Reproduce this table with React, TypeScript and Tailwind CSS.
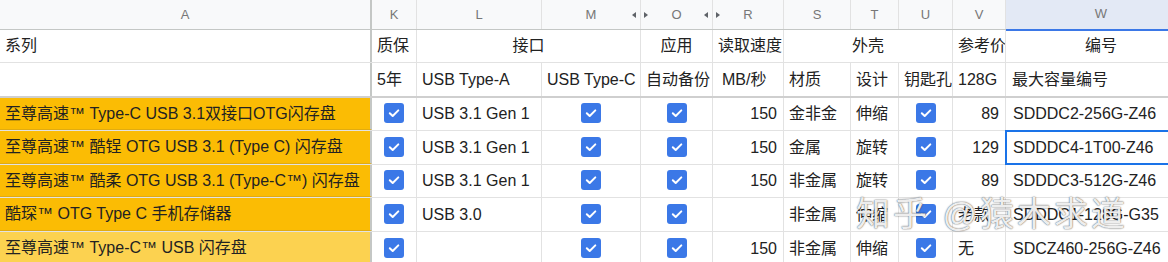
import React from 'react';
import clsx from 'clsx';

type Row = {
  name: string;
  iface: string;
  speed: string;
  material: string;
  design: string;
  price: string;
  priceRight: boolean;
  code: string;
  h: string;
  light?: boolean;
  selected?: boolean;
};

const rows: Row[] = [
  { name: '至尊高速™ Type-C USB 3.1双接口OTG闪存盘', iface: 'USB 3.1 Gen 1', speed: '150', material: '金非金', design: '伸缩', price: '89', priceRight: true, code: 'SDDDC2-256G-Z46', h: 'h-[33px]' },
  { name: '至尊高速™ 酷锃 OTG USB 3.1 (Type C) 闪存盘', iface: 'USB 3.1 Gen 1', speed: '150', material: '金属', design: '旋转', price: '129', priceRight: true, code: 'SDDDC4-1T00-Z46', h: 'h-[34px]', selected: true },
  { name: '至尊高速™ 酷柔 OTG USB 3.1 (Type-C™) 闪存盘', iface: 'USB 3.1 Gen 1', speed: '150', material: '非金属', design: '旋转', price: '89', priceRight: true, code: 'SDDDC3-512G-Z46', h: 'h-[33px]' },
  { name: '酷琛™ OTG Type C 手机存储器', iface: 'USB 3.0', speed: '', material: '非金属', design: '伸缩', price: '老款', priceRight: false, code: 'SDDDC1-128G-G35', h: 'h-[34px]' },
  { name: '至尊高速™ Type-C™ USB 闪存盘', iface: '', speed: '150', material: '非金属', design: '伸缩', price: '无', priceRight: false, code: 'SDCZ460-256G-Z46', h: 'h-[34px]', light: true },
];

const Cell: React.FC<{ w: string; className?: string; children?: React.ReactNode }> = ({ w, className, children }) => (
  <div
    className={clsx(
      'relative flex h-full shrink-0 items-center overflow-hidden whitespace-nowrap border-r border-[#e2e2e2] px-[5px]',
      w,
      className,
    )}
  >
    {children}
  </div>
);

const Check = () => (
  <div className="mx-auto mb-[2px] flex h-[20px] w-[20px] items-center justify-center rounded-[3px] bg-[#3b78e7]">
    <svg width="20" height="20" viewBox="0 0 20 20" fill="none">
      <path d="M5.8 10.2 L8.7 13 L14.3 7.4" stroke="white" strokeWidth="2" strokeLinecap="round" strokeLinejoin="round" />
    </svg>
  </div>
);

// hidden-columns marker sitting on a header boundary
const Hidden = () => (
  <div className="absolute right-[-9px] top-[11px] z-10">
    <svg width="18" height="8" viewBox="0 0 18 8">
      <path d="M1 4 L5 1 L5 7 Z" fill="#5f6368" />
      <path d="M17 4 L13 1 L13 7 Z" fill="#5f6368" />
    </svg>
  </div>
);

export default function App() {
  return (
    <div className="relative h-[262px] w-[1168px] overflow-hidden bg-white font-['Liberation_Sans','Noto_Sans_CJK_SC',sans-serif] text-[16px] text-[#222]">
      {/* column letters */}
      <div className="flex h-[30px] border-b border-[#c4c7c5] bg-[#f8f9fa] text-[13px] text-[#777]">
        <Cell w="w-[372px]" className="justify-center border-r-2 border-r-[#c4c7c5]">A</Cell>
        <Cell w="w-[45px]" className="justify-center">K</Cell>
        <Cell w="w-[125px]" className="justify-center">L</Cell>
        <div className="relative flex h-full w-[99px] shrink-0 items-center justify-center border-r border-[#e2e2e2]">
          M
          <Hidden />
        </div>
        <div className="relative flex h-full w-[72px] shrink-0 items-center justify-center border-r border-[#e2e2e2]">
          O
          <Hidden />
        </div>
        <Cell w="w-[71px]" className="justify-center">R</Cell>
        <Cell w="w-[67px]" className="justify-center">S</Cell>
        <Cell w="w-[48px]" className="justify-center">T</Cell>
        <Cell w="w-[54px]" className="justify-center">U</Cell>
        <Cell w="w-[53px]" className="justify-center">V</Cell>
        <div className="-mb-px flex h-[31px] w-[190px] shrink-0 items-center justify-center border-b-2 border-[#3b78e7] bg-[#e3e9f5] pb-[1px]">
          W
        </div>
      </div>

      {/* row 1 */}
      <div className="flex h-[33px] border-b border-[#e2e2e2]">
        <Cell w="w-[372px]" className="border-r-2 border-r-[#c4c7c5]">系列</Cell>
        <Cell w="w-[45px]" className="px-[3px]">质保</Cell>
        <Cell w="w-[224px]" className="justify-center">接口</Cell>
        <Cell w="w-[72px]" className="justify-center">应用</Cell>
        <Cell w="w-[71px]" className="px-[4px]">读取速度</Cell>
        <Cell w="w-[169px]" className="justify-center">外壳</Cell>
        <Cell w="w-[53px]" className="px-[4px]">参考价</Cell>
        <Cell w="w-[190px]" className="justify-center border-r-0">编号</Cell>
      </div>

      {/* row 2 */}
      <div className="flex h-[35px] border-b-2 border-[#cfcfcf]">
        <Cell w="w-[372px]" className="border-r-2 border-r-[#c4c7c5]" />
        <Cell w="w-[45px]" className="px-[3px]">5年</Cell>
        <Cell w="w-[125px]">USB Type-A</Cell>
        <Cell w="w-[99px]">USB Type-C</Cell>
        <Cell w="w-[72px]" className="px-[4px]">自动备份</Cell>
        <Cell w="w-[71px]" className="px-[9px]">MB/秒</Cell>
        <Cell w="w-[67px]">材质</Cell>
        <Cell w="w-[48px]">设计</Cell>
        <Cell w="w-[54px]">钥匙孔</Cell>
        <Cell w="w-[53px]">128G</Cell>
        <Cell w="w-[190px]" className="px-[6px]">最大容量编号</Cell>
      </div>

      {/* data */}
      {rows.map((r) => (
        <div key={r.code} className={clsx('flex border-b border-[#e2e2e2]', r.h)}>
          <Cell
            w="w-[372px]"
            className={clsx(
              '-mb-px h-[calc(100%+1px)] border-b border-r-2 border-b-[#e0ab12] border-r-[#c4c7c5]',
              r.light ? 'bg-[#fcd250]' : 'bg-[#fbbc04]',
            )}
          >
            {r.name}
          </Cell>
          <Cell w="w-[45px]">
            <Check />
          </Cell>
          <Cell w="w-[125px]">{r.iface}</Cell>
          <Cell w="w-[99px]">
            <Check />
          </Cell>
          <Cell w="w-[72px]">
            <Check />
          </Cell>
          <Cell w="w-[71px]" className="justify-end px-[6px]">{r.speed}</Cell>
          <Cell w="w-[67px]">{r.material}</Cell>
          <Cell w="w-[48px]">{r.design}</Cell>
          <Cell w="w-[54px]">
            <Check />
          </Cell>
          <Cell w="w-[53px]" className={r.priceRight ? 'justify-end px-[6px]' : ''}>
            {r.price}
          </Cell>
          <Cell w="w-[190px]" className="overflow-visible px-[7px]">
            {r.code}
            {r.selected && (
              <div className="absolute left-[-1px] top-[-1px] h-[calc(100%+2px)] w-[200px] border-2 border-[#1a73e8]" />
            )}
          </Cell>
        </div>
      ))}

      {/* watermark */}
      <div className="pointer-events-none absolute left-[856px] top-[194px] whitespace-nowrap text-[34px] leading-[40px] tracking-[3px] text-white/90 [text-shadow:0_0_1px_rgba(0,0,0,0.6),0_0_2px_rgba(0,0,0,0.4)]">
        知乎 @猿木求道
      </div>
    </div>
  );
}
